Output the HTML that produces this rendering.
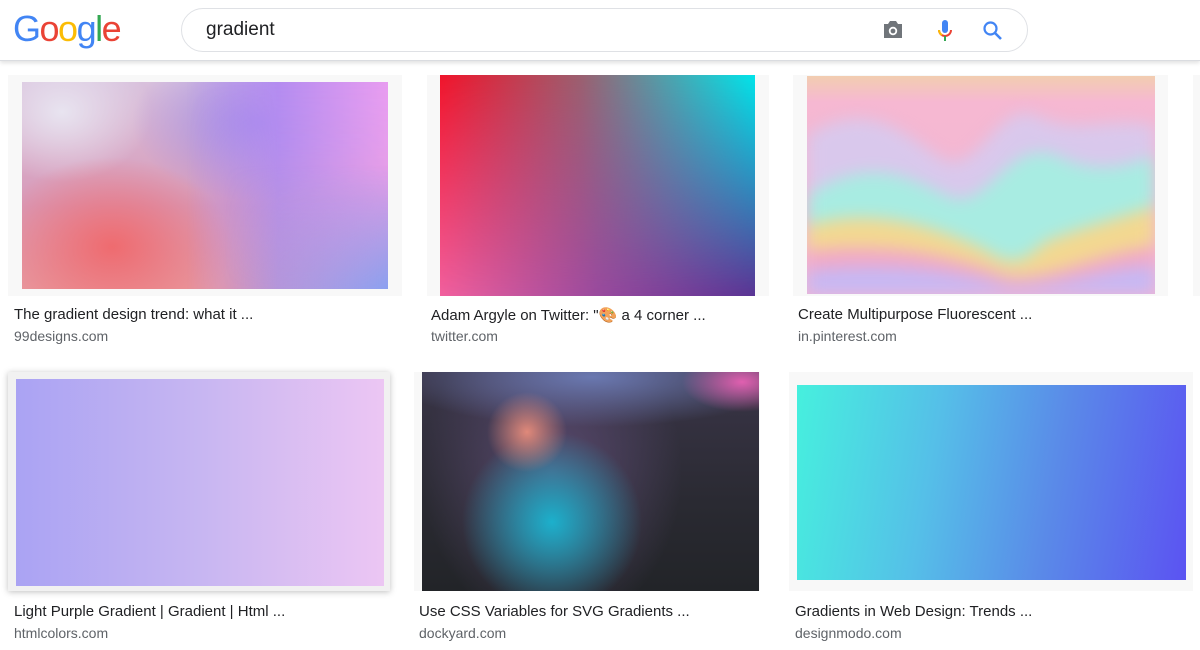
<!DOCTYPE html>
<html><head><meta charset="utf-8"><style>
*{margin:0;padding:0;box-sizing:border-box}
body{width:1200px;height:650px;overflow:hidden;background:#fff;font-family:"Liberation Sans",Arial,sans-serif;position:relative}
.hdr{position:absolute;left:0;top:0;width:1200px;height:61px;background:#fff;border-bottom:1px solid #dadce0;box-shadow:0 2px 4px rgba(0,0,0,.12)}
.logo{position:absolute;left:13px;top:8px;font-size:36px;letter-spacing:-1.5px;font-family:"Liberation Sans",sans-serif}
.sb{position:absolute;left:181px;top:8px;width:847px;height:44px;border:1px solid #dfe1e5;border-radius:22px}
.sb span{position:absolute;left:24px;top:10px;font-size:19px;color:#202124}
.t{position:absolute;background:#f8f8f8}
.i{position:absolute}
.c{position:absolute;font-size:15px;color:#202124;white-space:nowrap}
.d{position:absolute;font-size:14px;color:#5f6368}
.m{position:absolute;left:0;top:0;width:100%;height:100%;-webkit-mask-image:linear-gradient(to bottom,#000,transparent);mask-image:linear-gradient(to bottom,#000,transparent)}
</style></head><body>
<div class="hdr">
<div class="logo"><span style="color:#4285f4">G</span><span style="color:#ea4335">o</span><span style="color:#fbbc05">o</span><span style="color:#4285f4">g</span><span style="color:#34a853">l</span><span style="color:#ea4335">e</span></div>
<div class="sb"><span>gradient</span>
<svg style="position:absolute;left:699px;top:10px" width="24" height="22" viewBox="0 0 24 22"><path d="M3 5h4l2-3h6l2 3h4v14H3z" fill="#70757a"/><circle cx="12" cy="12" r="4.2" fill="#fff"/><circle cx="12" cy="12" r="2.4" fill="#70757a"/></svg>
<svg style="position:absolute;left:754px;top:10px" width="18" height="26" viewBox="0 0 18 26"><rect x="6" y="1" width="6" height="13" rx="3" fill="#4285f4"/><path d="M3 11a6 6 0 0 0 12 0" stroke="#ea4335" stroke-width="2" fill="none"/><path d="M3 11a6 6 0 0 0 3 5" stroke="#fbbc05" stroke-width="2" fill="none"/><rect x="8" y="17" width="2" height="5" fill="#34a853"/></svg>
<svg style="position:absolute;left:800px;top:11px" width="22" height="22" viewBox="0 0 22 22"><circle cx="8.5" cy="8.5" r="6" stroke="#4285f4" stroke-width="2.2" fill="none"/><path d="M13 13l6 6" stroke="#4285f4" stroke-width="2.6"/></svg>
</div></div>

<div class="t" style="left:8px;top:75px;width:394px;height:221px"></div>
<div class="i" style="left:22px;top:82px;width:366px;height:207px;background:radial-gradient(ellipse 120px 90px at 90px 165px,#ef6b6f,transparent),radial-gradient(ellipse 130px 80px at 240px 40px,#9c8ae8,transparent),radial-gradient(ellipse 90px 70px at 40px 30px,#e8e4f0,transparent),linear-gradient(180deg,#d8c0dc,#d89ab8 60%,#e89aa0);"></div>
<div class="i" style="left:22px;top:82px;width:366px;height:207px;background:linear-gradient(90deg,transparent 45%,#b48cf0 70%,#e89cf0);-webkit-mask-image:linear-gradient(to bottom,#000,rgba(0,0,0,.6));"></div>
<div class="i" style="left:22px;top:82px;width:366px;height:207px;background:linear-gradient(90deg,transparent 55%,#8aa0f0);-webkit-mask-image:linear-gradient(to bottom,transparent 40%,#000);"></div>
<div class="c" style="left:14px;top:306px">The gradient design trend: what it ...</div>
<div class="d" style="left:14px;top:328px">99designs.com</div>

<div class="t" style="left:427px;top:75px;width:342px;height:221px"></div>
<div class="i" style="left:440px;top:75px;width:315px;height:221px;background:linear-gradient(90deg,#f2609e,#9a4a9e 50%,#5a3494)">
<div class="m" style="background:linear-gradient(90deg,#f0142a,#9a6070 45%,#00e5ea)"></div></div>
<div class="c" style="left:431px;top:306px">Adam Argyle on Twitter: "🎨 a 4 corner ...</div>
<div class="d" style="left:431px;top:328px">twitter.com</div>

<div class="t" style="left:793px;top:75px;width:375px;height:221px"></div>
<div class="i" style="left:807px;top:76px;width:348px;height:218px;overflow:hidden;background:linear-gradient(180deg,#f2cdb0 0%,#f6b8d2 12%,#f0b6d4 100%)">
<svg width="348" height="218" viewBox="0 0 348 218" preserveAspectRatio="none" style="filter:blur(8px)">
<path d="M0 60 C60 20 100 60 130 80 C170 110 190 20 230 40 C270 60 300 40 348 50 V218 H0Z" fill="#d9c8ec"/>
<path d="M0 120 C60 80 100 100 140 120 C180 140 200 60 250 80 C290 100 320 90 348 80 V218 H0Z" fill="#a8ece2"/>
<path d="M0 150 C60 130 130 150 180 175 C210 195 220 180 240 165 C280 150 320 140 348 130 V218 H0Z" fill="#f3d890"/>
<path d="M0 175 C80 165 150 180 200 200 C240 205 280 180 348 170 V218 H0Z" fill="#f2a8c8"/>
<path d="M0 195 C80 185 150 195 200 210 C260 212 300 190 348 190 V218 H0Z" fill="#c6b8f4"/>
</svg></div>
<div class="c" style="left:798px;top:306px">Create Multipurpose Fluorescent ...</div>
<div class="d" style="left:798px;top:328px">in.pinterest.com</div>
<div class="t" style="left:1193px;top:75px;width:7px;height:221px"></div>

<div class="t" style="left:8px;top:372px;width:382px;height:219px;background:#f1f1f1;box-shadow:0 1px 6px rgba(0,0,0,.25)"></div>
<div class="i" style="left:16px;top:379px;width:368px;height:207px;background:linear-gradient(90deg,#aaa3f3,#c7b6f2 50%,#ecc6f3)"></div>
<div class="c" style="left:14px;top:603px">Light Purple Gradient | Gradient | Html ...</div>
<div class="d" style="left:14px;top:625px">htmlcolors.com</div>

<div class="t" style="left:414px;top:372px;width:346px;height:219px"></div>
<div class="i" style="left:422px;top:372px;width:337px;height:219px;background:radial-gradient(ellipse 40px 40px at 105px 60px,#e0897a,transparent),radial-gradient(ellipse 90px 90px at 130px 150px,#1cb0cc,transparent),radial-gradient(ellipse 60px 30px at 320px 10px,#e060b0,transparent),radial-gradient(ellipse 200px 50px at 170px 5px,#6a78b0,transparent),radial-gradient(ellipse 130px 160px at 130px 100px,#5a4a70,transparent),linear-gradient(180deg,#3a3548,#2a2a32 60%,#222428)"></div>
<div class="c" style="left:419px;top:603px">Use CSS Variables for SVG Gradients ...</div>
<div class="d" style="left:419px;top:625px">dockyard.com</div>

<div class="t" style="left:789px;top:372px;width:404px;height:219px"></div>
<div class="i" style="left:797px;top:385px;width:389px;height:195px;background:linear-gradient(100deg,#46f0de,#55bfe8 35%,#5a8ae8 65%,#5b53f2)"></div>
<div class="c" style="left:795px;top:603px">Gradients in Web Design: Trends ...</div>
<div class="d" style="left:795px;top:625px">designmodo.com</div>
</body></html>
